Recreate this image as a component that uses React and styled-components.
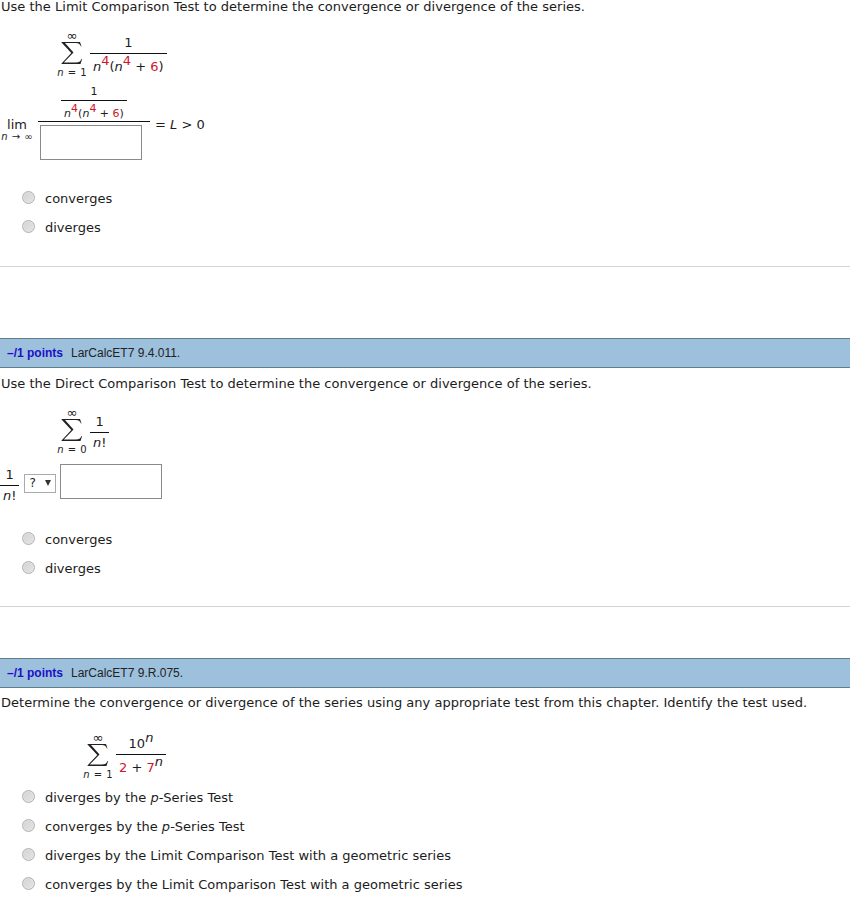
import React from 'react';
import styled, { createGlobalStyle } from 'styled-components';

const GlobalStyle = createGlobalStyle`
  html, body {
    margin: 0;
    padding: 0;
    background: #fff;
  }
  body {
    font-family: "DejaVu Sans", Verdana, sans-serif;
    font-size: 13px;
    color: #1c1c1c;
  }
`;

const Page = styled.div`
  width: 850px;
  height: 911px;
  overflow: hidden;
`;

const Header = styled.div`
  height: 28px;
  margin-top: ${(p) => p.$top}px;
  padding-left: 7px;
  display: flex;
  align-items: center;
  background: #9dc0dc;
  border-top: 1px solid #5f7f8f;
  border-bottom: 1px solid #5f7f8f;
  font-family: "Liberation Sans", Arial, sans-serif;
  font-size: 12px;
  color: #222;
`;

const Points = styled.b`
  color: #1c10c8;
  margin-right: 8px;
`;

const Prompt = styled.div`
  height: 14px;
  line-height: 14px;
  margin-top: ${(p) => p.$top}px;
  padding-left: 1px;
  letter-spacing: 0.02px;
  white-space: nowrap;
`;

const MathRow = styled.div`
  display: flex;
  align-items: center;
  margin-top: ${(p) => p.$top}px;
  padding-left: ${(p) => p.$left}px;
`;

const SumWrap = styled.div`
  width: 30px;
  padding-bottom: 1px;
  display: flex;
  flex-direction: column;
  align-items: center;
  margin-right: 3px;
`;

const Small = styled.span`
  font-size: ${(p) => (p.$big ? 13 : 10)}px;
  line-height: 10px;
  word-spacing: 1px;
  white-space: nowrap;
  color: #222;
`;

const Sigma = styled.svg`
  display: block;
  width: 22px;
  height: 22px;
  margin: 1px 0 4px;
`;

const Fraction = styled.div`
  display: flex;
  flex-direction: column;
  align-items: stretch;
  text-align: center;
  margin-bottom: ${(p) => p.$bottom || 0}px;
`;

const Numerator = styled.div`
  padding: 0 ${(p) => p.$side ?? 2}px ${(p) => p.$gap ?? 2}px;
  font-size: ${(p) => (p.$small ? 11 : 13)}px;
  line-height: 16px;
  border-bottom: 1px solid #111;
  white-space: nowrap;
`;

const Denominator = styled.div`
  padding: ${(p) => p.$gap ?? 5}px ${(p) => p.$side ?? 2}px 0;
  font-size: ${(p) => (p.$small ? 11 : 13)}px;
  line-height: ${(p) => (p.$small ? 15 : 16)}px;
  white-space: nowrap;
`;

const Var = styled.i`
  font-style: italic;
`;

const Red = styled.span`
  color: #d0142c;
`;

const Sup = styled.sup`
  font-size: 1em;
  line-height: 0;
  vertical-align: 0.45em;
  color: ${(p) => p.$color || 'inherit'};
`;

const Lim = styled.div`
  display: flex;
  flex-direction: column;
  align-items: center;
  width: 34px;
  margin: 15px 4px 0 0;
`;

const LimWord = styled.span`
  line-height: 14px;
`;

const OuterDen = styled.div`
  padding: 3px 8px 0 2px;
`;

const AnswerBox = styled.div`
  box-sizing: border-box;
  width: 102px;
  height: 35px;
  margin-bottom: ${(p) => p.$bottom || 0}px;
  border: 1px solid #8a8a8a;
  background: #fff;
`;

const Relation = styled.span`
  margin: 4px 0 0 5px;
  white-space: nowrap;
`;

const Select = styled.div`
  box-sizing: border-box;
  width: 32px;
  height: 19px;
  margin: 0 4px 5px 5px;
  padding: 0 4px;
  border: 1px solid #aaa;
  display: flex;
  align-items: center;
  justify-content: space-between;
  font-size: 12px;
`;

const Caret = styled.span`
  width: 0;
  height: 0;
  border-left: 3px solid transparent;
  border-right: 3px solid transparent;
  border-top: 6px solid #333;
`;

const Options = styled.div`
  display: flex;
  flex-direction: column;
  margin-top: ${(p) => p.$top}px;
  padding-left: 22px;
`;

const Option = styled.label`
  height: 29px;
  display: flex;
  align-items: center;
  gap: 10px;
`;

const Radio = styled.input.attrs({ type: 'radio' })`
  appearance: none;
  box-sizing: border-box;
  width: 13px;
  height: 13px;
  margin: 0 0 2px;
  border: 1px solid #b0b0b0;
  border-radius: 50%;
  background: linear-gradient(135deg, #d4d4d4, #e4e4e4);
  box-shadow: inset 0 0 1px #fff;
`;

const Rule = styled.hr`
  height: 1px;
  margin: ${(p) => p.$top}px 0 0;
  border: 0;
  background: #d4d4d4;
`;

const Sum = ({ from }) => (
  <SumWrap>
    <Small $big>∞</Small>
    <Sigma viewBox="0 0 22 22">
      <path d="M.5 0H19l1.500 4.500H20C19 2 17.500 1 15 1H4l8.500 9.500L2.800 20.500H15c3 0 4.500-1 5.500-3.500h.6L19.500 22H.5v-.6L10.300 11 .5 .6z" fill="#222" />
    </Sigma>
    <Small>
      <Var>n</Var> = {from}
    </Small>
  </SumWrap>
);

const Term = () => (
  <>
    <Var>n</Var>
    <Sup $color="#d0142c">4</Sup>(<Var>n</Var>
    <Sup $color="#d0142c">4</Sup> + <Red>6</Red>)
  </>
);

const RadioList = ({ top, items }) => (
  <Options $top={top}>
    {items.map((item, i) => (
      <Option key={i}>
        <Radio />
        <span>{item}</span>
      </Option>
    ))}
  </Options>
);

const App = () => {
  return (
    <Page>
      <GlobalStyle />

      <Prompt $top={0}>
        Use the Limit Comparison Test to determine the convergence or divergence of the series.
      </Prompt>
      <MathRow $top={17} $left={57}>
        <Sum from="1" />
        <Fraction>
          <Numerator>1</Numerator>
          <Denominator $side={3}>
            <Term />
          </Denominator>
        </Fraction>
      </MathRow>

      <MathRow $top={5} $left={0}>
        <Lim>
          <LimWord>lim</LimWord>
          <Small>
            <Var>n</Var> → ∞
          </Small>
        </Lim>
        <Fraction>
          <Numerator $side={23} $gap={0}>
            <Fraction>
              <Numerator $small $gap={0}>1</Numerator>
              <Denominator $small $gap={5}>
                <Term />
              </Denominator>
            </Fraction>
          </Numerator>
          <OuterDen>
            <AnswerBox />
          </OuterDen>
        </Fraction>
        <Relation>
          = <Var>L</Var> &gt; 0
        </Relation>
      </MathRow>

      <RadioList top={24} items={['converges', 'diverges']} />
      <Rule $top={24} />

      <Header $top={71}>
        <Points>–/1 points</Points> LarCalcET7 9.4.011.
      </Header>
      <Prompt $top={9}>
        Use the Direct Comparison Test to determine the convergence or divergence of the series.
      </Prompt>
      <MathRow $top={17} $left={57}>
        <Sum from="0" />
        <Fraction>
          <Numerator $side={3}>1</Numerator>
          <Denominator $side={3} $gap={2}>
            <Var>n</Var>!
          </Denominator>
        </Fraction>
      </MathRow>
      <MathRow $top={8} $left={0}>
        <Fraction>
          <Numerator $side={3}>1</Numerator>
          <Denominator $side={3} $gap={2}>
            <Var>n</Var>!
          </Denominator>
        </Fraction>
        <Select>
          ? <Caret />
        </Select>
        <AnswerBox $bottom={8} />
      </MathRow>

      <RadioList top={18} items={['converges', 'diverges']} />
      <Rule $top={23} />

      <Header $top={51}>
        <Points>–/1 points</Points> LarCalcET7 9.R.075.
      </Header>
      <Prompt $top={8}>
        Determine the convergence or divergence of the series using any appropriate test from this chapter. Identify the test used.
      </Prompt>
      <MathRow $top={23} $left={83}>
        <Sum from="1" />
        <Fraction $bottom={3}>
          <Numerator $side={3}>
            10<Sup><Var>n</Var></Sup>
          </Numerator>
          <Denominator $side={3}>
            <Red>2</Red> + <Red>7</Red><Sup><Var>n</Var></Sup>
          </Denominator>
        </Fraction>
      </MathRow>
      <RadioList
        top={2}
        items={[
          <>diverges by the <Var>p</Var>-Series Test</>,
          <>converges by the <Var>p</Var>-Series Test</>,
          'diverges by the Limit Comparison Test with a geometric series',
          'converges by the Limit Comparison Test with a geometric series',
        ]}
      />
    </Page>
  );
};

export default App;
